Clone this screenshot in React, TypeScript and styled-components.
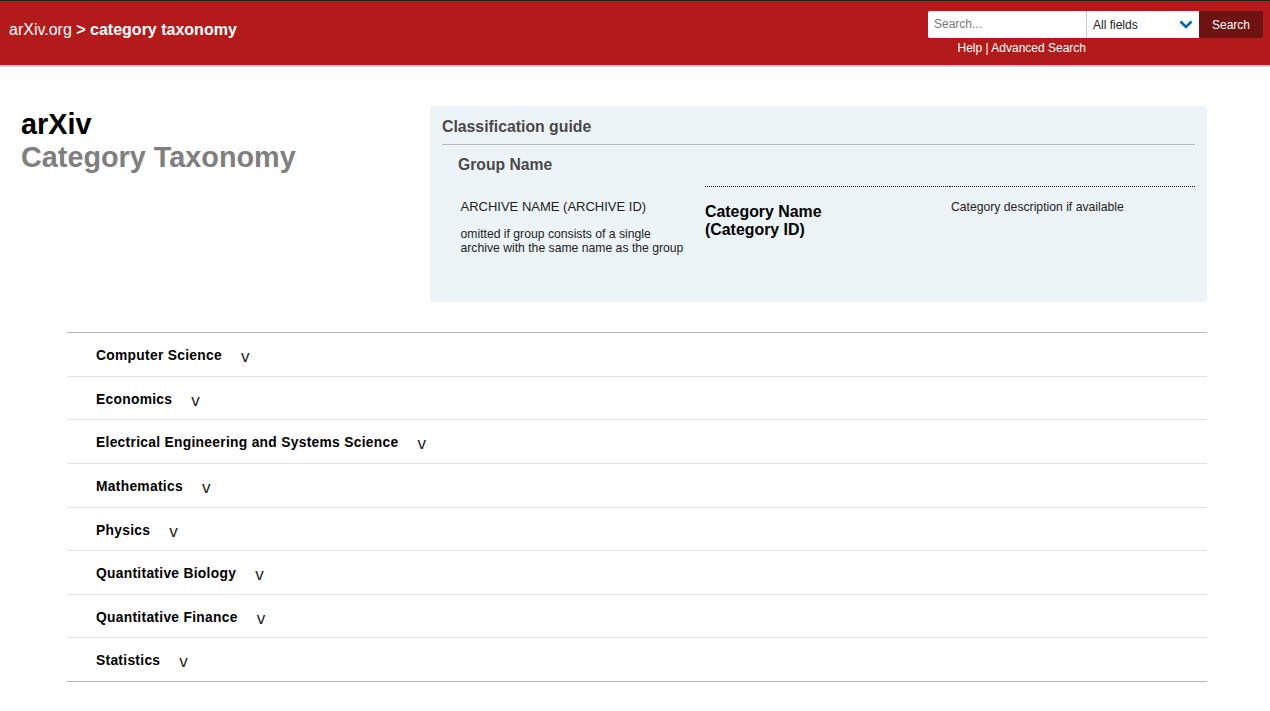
import React from "react";
import styled, { createGlobalStyle } from "styled-components";

const Global = createGlobalStyle`
  html, body { margin: 0; padding: 0; background: #fff; }
  body { font-family: "Liberation Sans", Arial, sans-serif; color: #000; }
`;

const Header = styled.header`
  height: 67px;
  box-sizing: border-box;
  background: #b31b1b;
  border-top: 1px solid #222;
  border-bottom: 2px solid #ccc;
  display: flex;
  justify-content: space-between;
  padding: 10px 7px 0 9px;
`;
const Crumbs = styled.div`
  color: #fff;
  font-size: 16px;
  line-height: 18px;
  padding-top: 10px;
  b { font-weight: 700; }
`;
const SearchBlock = styled.div`
  display: flex;
  flex-direction: column;
`;
const SearchRow = styled.form`
  display: flex;
  height: 27px;
  margin: 0;
`;
const SearchInput = styled.div`
  width: 152px;
  background: #fff;
  border-radius: 2px 0 0 2px;
  padding-left: 6px;
  color: #7a7a7a;
  font-size: 12px;
  line-height: 27px;
`;
const FieldSelect = styled.div`
  width: 113px;
  background: #fff;
  border-left: 1px solid #ccc;
  display: flex;
  align-items: center;
  justify-content: space-between;
  padding: 0 6px;
  box-sizing: border-box;
  font-size: 12px;
  color: #222;
  svg { display: block; }
`;
const SearchButton = styled.div`
  width: 64px;
  background: #6e1212;
  border-radius: 0 2px 2px 0;
  color: #fff;
  font-size: 12px;
  line-height: 29px;
  text-align: center;
`;
const HelpLine = styled.div`
  color: #fff;
  font-size: 12px;
  line-height: 14px;
  margin: 3px 0 0 29.5px;
`;

const Top = styled.section`
  display: flex;
  padding: 39px 63px 0 21px;
`;
const TitleBlock = styled.div`
  width: 409px;
  flex: none;
  padding-top: 2px;
`;
const Title = styled.h1`
  margin: 0;
  font-size: 28.8px;
  line-height: 33px;
  font-weight: 700;
`;
const Subtitle = styled.span`
  display: block;
  color: #7f7f7f;
`;
const Guide = styled.aside`
  flex: 1;
  height: 196px;
  box-sizing: border-box;
  background: #edf4f8;
  border-radius: 3px;
  box-shadow: 0 0 2px rgba(0, 0, 0, 0.04);
  padding: 11px 12px 0;
`;
const GuideTitle = styled.h2`
  margin: 0;
  font-size: 15.8px;
  line-height: 19px;
  color: #494949;
  padding-bottom: 8px;
  border-bottom: 1px solid #b9b9b9;
`;
const GroupName = styled.h3`
  margin: 10px 0 0 16px;
  font-size: 15.7px;
  line-height: 19px;
  color: #494949;
`;
const GuideGrid = styled.div`
  display: grid;
  grid-template-columns: 263px 245px 245px;
  margin-top: 12px;
`;
const ArchiveCol = styled.div`
  padding: 13px 0 0 18.5px;
`;
const ArchiveName = styled.div`
  font-size: 13px;
  line-height: 16px;
  color: #222;
`;
const ArchiveNote = styled.div`
  font-size: 12.2px;
  line-height: 14px;
  color: #222;
  margin-top: 12px;
`;
const CategoryCol = styled.div`
  border-top: 1px dotted #000;
  padding: 16px 0 0;
  font-size: 15.9px;
  line-height: 18px;
  font-weight: 700;
`;
const DescriptionCol = styled.div`
  border-top: 1px dotted #000;
  padding: 13px 0 0 1px;
  font-size: 12.2px;
  line-height: 14px;
  color: #222;
`;

const Accordion = styled.div`
  margin: 30px 63px 0 67px;
  border-bottom: 1px solid #b5b5b5;
`;
const Row = styled.div`
  height: 43.625px;
  box-sizing: border-box;
  display: flex;
  padding-left: 29px;
  border-top: 1px solid #e2e2e2;
  &:first-child { border-top-color: #b5b5b5; }
`;
const RowLabel = styled.span`
  font-size: 13.8px;
  font-weight: 700;
  letter-spacing: 0.3px;
  line-height: 16px;
  padding-top: 15px;
`;
const RowMark = styled.span`
  font-size: 17px;
  line-height: 18px;
  padding-top: 15px;
  margin-left: 19px;
  color: #222;
`;

const groups = [
  "Computer Science",
  "Economics",
  "Electrical Engineering and Systems Science",
  "Mathematics",
  "Physics",
  "Quantitative Biology",
  "Quantitative Finance",
  "Statistics",
];

export default function App() {
  return (
    <>
      <Global />
      <Header>
        <Crumbs>
          arXiv.org <b>&gt; category taxonomy</b>
        </Crumbs>
        <SearchBlock>
          <SearchRow>
            <SearchInput>Search...</SearchInput>
            <FieldSelect>
              All fields
              <svg width="14" height="9" viewBox="0 0 14 9" fill="none">
                <path d="M1.5 1.5 7 7l5.5-5.5" stroke="#0068ac" strokeWidth="2.6" />
              </svg>
            </FieldSelect>
            <SearchButton>Search</SearchButton>
          </SearchRow>
          <HelpLine>Help | Advanced Search</HelpLine>
        </SearchBlock>
      </Header>
      <Top>
        <TitleBlock>
          <Title>
            arXiv
            <Subtitle>Category Taxonomy</Subtitle>
          </Title>
        </TitleBlock>
        <Guide>
          <GuideTitle>Classification guide</GuideTitle>
          <GroupName>Group Name</GroupName>
          <GuideGrid>
            <ArchiveCol>
              <ArchiveName>ARCHIVE NAME (ARCHIVE ID)</ArchiveName>
              <ArchiveNote>
                omitted if group consists of a single
                <br />
                archive with the same name as the group
              </ArchiveNote>
            </ArchiveCol>
            <CategoryCol>
              Category Name
              <br />
              (Category ID)
            </CategoryCol>
            <DescriptionCol>Category description if available</DescriptionCol>
          </GuideGrid>
        </Guide>
      </Top>
      <Accordion>
        {groups.map((g) => (
          <Row key={g}>
            <RowLabel>{g}</RowLabel>
            <RowMark>v</RowMark>
          </Row>
        ))}
      </Accordion>
    </>
  );
}
